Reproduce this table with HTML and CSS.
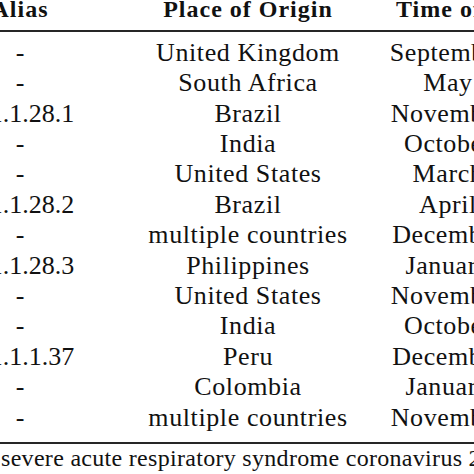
FILE: index.html
```html
<!DOCTYPE html>
<html>
<head>
<meta charset="utf-8">
<link rel="stylesheet" href="styles.css">
</head>
<body>
<div class="page">
  <div class="table">
    <div class="row head">
      <div class="cell">Alias</div>
      <div class="cell">Place of Origin</div>
      <div class="cell start">Time of Detection</div>
    </div>
    <div class="body">
      <div class="row"><div class="cell alias">-</div><div class="cell">United Kingdom</div><div class="cell">September</div></div>
      <div class="row"><div class="cell alias">-</div><div class="cell">South Africa</div><div class="cell">May</div></div>
      <div class="row"><div class="cell alias">B.1.1.28.1</div><div class="cell">Brazil</div><div class="cell">November</div></div>
      <div class="row"><div class="cell alias">-</div><div class="cell">India</div><div class="cell">October</div></div>
      <div class="row"><div class="cell alias">-</div><div class="cell">United States</div><div class="cell">March</div></div>
      <div class="row"><div class="cell alias">B.1.1.28.2</div><div class="cell">Brazil</div><div class="cell">April</div></div>
      <div class="row"><div class="cell alias">-</div><div class="cell">multiple countries</div><div class="cell">December</div></div>
      <div class="row"><div class="cell alias">B.1.1.28.3</div><div class="cell">Philippines</div><div class="cell">January</div></div>
      <div class="row"><div class="cell alias">-</div><div class="cell">United States</div><div class="cell">November</div></div>
      <div class="row"><div class="cell alias">-</div><div class="cell">India</div><div class="cell">October</div></div>
      <div class="row"><div class="cell alias">B.1.1.1.37</div><div class="cell">Peru</div><div class="cell">December</div></div>
      <div class="row"><div class="cell alias">-</div><div class="cell">Colombia</div><div class="cell">January</div></div>
      <div class="row"><div class="cell alias">-</div><div class="cell">multiple countries</div><div class="cell">November</div></div>
    </div>
  </div>
  <p class="caption">severe acute respiratory syndrome coronavirus 2</p>
</div>
</body>
</html>
```
FILE: styles.css
```css
html, body {
  margin: 0;
  padding: 0;
  background: #ffffff;
}
.page {
  width: 474px;
  height: 474px;
  overflow: hidden;
  font-family: "Liberation Serif", "Times New Roman", serif;
  color: #111111;
}
.table {
  margin-left: -60px;
  width: 560px;
}
.row {
  display: grid;
  grid-template-columns: 160px 296px 104px;
}
.cell {
  display: flex;
  justify-content: center;
  white-space: nowrap;
  min-width: 0;
}
.cell.start {
  justify-content: flex-start;
  padding-left: 0;
}
.head {
  font-size: 24px;
  font-weight: bold;
  letter-spacing: 1px;
  line-height: 18px;
  padding-bottom: 12px;
  border-bottom: 2px solid #262626;
}
.body {
  padding-top: 5.7px;
  padding-bottom: 9px;
  border-bottom: 2px solid #262626;
}
.body .row {
  font-size: 26px;
  line-height: 30.4px;
  letter-spacing: 0.6px;
}
.body .alias {
  letter-spacing: 0;
}
.caption {
  margin: 1px 0 0 1px;
  font-size: 24px;
  line-height: 26px;
  letter-spacing: 0.3px;
  white-space: nowrap;
}
```
